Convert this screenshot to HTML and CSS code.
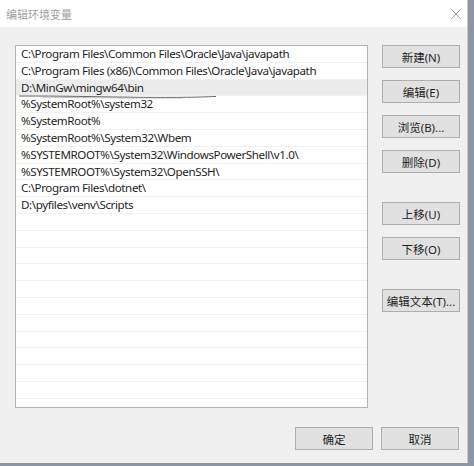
FILE: index.html
```html
<!DOCTYPE html>
<html lang="zh-CN">
<head>
  <meta charset="UTF-8" />
  <title>编辑环境变量</title>
  <link rel="stylesheet" href="styles.css">
</head>
<body>
  <div class="window">
    <!-- Title bar -->
    <div class="titlebar">
      <span class="title">编辑环境变量</span>
      <svg class="close" width="10" height="10" viewBox="0 0 10 10">
        <path d="M0.5 0.5 L9.5 9.5 M9.5 0.5 L0.5 9.5" stroke="#9a9a9a" stroke-width="1" fill="none"/>
      </svg>
    </div>

    <!-- Dialog body -->
    <div class="body">
      <div class="main">
        <div class="list">
          <div class="row">C:\Program Files\Common Files\Oracle\Java\javapath</div>
          <div class="row">C:\Program Files (x86)\Common Files\Oracle\Java\javapath</div>
          <div class="row selected">D:\MinGw\mingw64\bin</div>
          <div class="row">%SystemRoot%\system32</div>
          <div class="row">%SystemRoot%</div>
          <div class="row">%SystemRoot%\System32\Wbem</div>
          <div class="row">%SYSTEMROOT%\System32\WindowsPowerShell\v1.0\</div>
          <div class="row">%SYSTEMROOT%\System32\OpenSSH\</div>
          <div class="row">C:\Program Files\dotnet\</div>
          <div class="row">D:\pyfiles\venv\Scripts</div>
          <div class="row"></div>
          <div class="row"></div>
          <div class="row"></div>
          <div class="row"></div>
          <div class="row"></div>
          <div class="row"></div>
          <div class="row"></div>
          <div class="row"></div>
          <div class="row"></div>
          <div class="row"></div>
          <div class="row"></div>
          <div class="row"></div>

          <!-- hand-drawn underline on top of the list -->
          <svg class="scribble" width="210" height="6" viewBox="0 0 210 6">
            <path d="M1 2.0 C40 1.8 80 2.8 120 3.3 C150 3.6 180 3.4 198 2.4" stroke="#666" stroke-width="1" fill="none"/>
            <path d="M24 3.2 C70 3.8 120 4.2 165 4.0" stroke="#999" stroke-width="0.6" fill="none"/>
          </svg>
        </div>

        <div class="side">
          <button class="btn">新建(N)</button>
          <button class="btn">编辑(E)</button>
          <button class="btn">浏览(B)...</button>
          <button class="btn">删除(D)</button>
          <button class="btn gap">上移(U)</button>
          <button class="btn">下移(O)</button>
          <button class="btn gap">编辑文本(T)...</button>
        </div>
      </div>

      <div class="footer">
        <button class="btn">确定</button>
        <button class="btn">取消</button>
      </div>
    </div>
  </div>
</body>
</html>
```

FILE: styles.css
```css
/* ---------- Page ---------- */
* {
  box-sizing: border-box;
  margin: 0;
  padding: 0;
}
html, body {
  width: 474px;
  height: 466px;
  overflow: hidden;
}
body {
  background-color: #8c96a2; /* desktop behind the dialog */
  font-family: "Noto Sans", "Noto Sans CJK SC", sans-serif;
  font-size: 12px;
  color: #1e1e1e;
}

/* ---------- Window ---------- */
.window {
  width: 468px;
  height: 463px;
  background-color: #f0f0f0;
  display: flex;
  flex-direction: column;
  border-right: 1px solid #c8ccd2;
}
.titlebar {
  height: 27px;
  background-color: #ffffff;
  display: flex;
  align-items: center;
  justify-content: space-between;
  padding: 0 6px 0 6px;
}
.title {
  color: #a0a0a0;
  font-size: 11px;
}

/* ---------- Body ---------- */
.body {
  flex: 1;
  display: flex;
  flex-direction: column;
  padding: 18px 0 0 15px;
}
.main {
  display: flex;
  gap: 14px;
}

/* ---------- List ---------- */
.list {
  position: relative;
  width: 353px;
  height: 363px;
  background-color: #ffffff;
  border: 1px solid #b4b4b4;
  overflow: hidden;
}
.row {
  height: 16.8px;
  line-height: 16px;
  padding-left: 5px;
  border-bottom: 1px solid #f1f1f1;
  white-space: nowrap;
  font-size: 11.6px;
  letter-spacing: -0.4px;
}
.row.selected {
  background-color: #ececec;
}
.scribble {
  position: absolute;
  left: 2px;
  top: 48px;
}

/* ---------- Buttons ---------- */
.btn {
  width: 78px;
  height: 23px;
  background-color: #e1e1e1;
  border: 1px solid #adadad;
  font-family: inherit;
  font-size: 11.5px;
  color: #1e1e1e;
}
.side {
  display: flex;
  flex-direction: column;
  gap: 12px;
}
.side .gap {
  margin-top: 17px;
}
.footer {
  display: flex;
  justify-content: flex-end;
  gap: 8px;
  padding-right: 8px;
  margin-top: 19px;
}
```
